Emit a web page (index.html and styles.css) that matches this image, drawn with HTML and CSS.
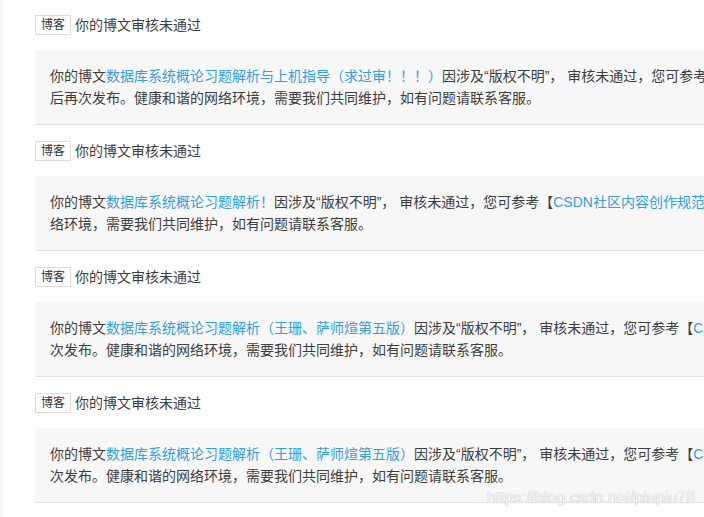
FILE: index.html
```html
<!DOCTYPE html>
<html lang="zh-CN">
  <head>
    <meta charset="UTF-8" />
    <meta name="viewport" content="width=device-width, initial-scale=1.0" />
    <title>消息通知</title>
    <link rel="stylesheet" href="styles.css">
  </head>
  <body class="body">
    <div class="page">
      <div class="item">
        <div class="head">
          <span class="tag">博客</span>
          <span class="title">你的博文审核未通过</span>
        </div>
        <div class="msg">你的博文<a class="link" href="#">数据库系统概论习题解析与上机指导（求过审！！！）</a>因涉及“版权不明”， 审核未通过，您可参考【<a class="link" href="#">CSDN社区内容创作规范</a>】修改后再次发布。健康和谐的网络环境，需要我们共同维护，如有问题请联系客服。</div>
      </div>
      <div class="item">
        <div class="head">
          <span class="tag">博客</span>
          <span class="title">你的博文审核未通过</span>
        </div>
        <div class="msg">你的博文<a class="link" href="#">数据库系统概论习题解析！</a>因涉及“版权不明”， 审核未通过，您可参考【<a class="link" href="#">CSDN社区内容创作规范</a>】修改后再次发布。健康和谐的网络环境，需要我们共同维护，如有问题请联系客服。</div>
      </div>
      <div class="item">
        <div class="head">
          <span class="tag">博客</span>
          <span class="title">你的博文审核未通过</span>
        </div>
        <div class="msg">你的博文<a class="link" href="#">数据库系统概论习题解析（王珊、萨师煊第五版）</a>因涉及“版权不明”， 审核未通过，您可参考【<a class="link" href="#">CSDN社区内容创作规范</a>】修改后再次发布。健康和谐的网络环境，需要我们共同维护，如有问题请联系客服。</div>
      </div>
      <div class="item">
        <div class="head">
          <span class="tag">博客</span>
          <span class="title">你的博文审核未通过</span>
        </div>
        <div class="msg">你的博文<a class="link" href="#">数据库系统概论习题解析（王珊、萨师煊第五版）</a>因涉及“版权不明”， 审核未通过，您可参考【<a class="link" href="#">CSDN社区内容创作规范</a>】修改后再次发布。健康和谐的网络环境，需要我们共同维护，如有问题请联系客服。</div>
      </div>
    </div>
    <div class="watermark">https://blog.csdn.net/piupiu78</div>
  </body>
</html>
```

FILE: styles.css
```css
.body {
  margin: 0;
  overflow: hidden;
  background-color: #fff;
  font-family: "Liberation Sans", "Noto Sans CJK SC", sans-serif;
  color: #3d3d3d;
}
.page {
  border-left: 3px solid #f3f4f6;
  padding: 15px 0 0 32px;
  width: 1000px;
  min-height: 517px;
}
.item {
  margin-bottom: 16px;
}
.head {
  display: flex;
  align-items: center;
  height: 20px;
}
.tag {
  border: 1px solid #dcdcdc;
  padding: 0 5px;
  font-size: 12px;
  line-height: 18px;
  color: #333;
}
.title {
  margin-left: 4px;
  font-size: 14px;
  line-height: 20px;
}
.msg {
  margin-top: 15px;
  width: 874px;
  padding: 15px;
  background-color: #f7f7f7;
  border-bottom: 1px solid #e2e2e2;
  font-size: 14px;
  line-height: 22px;
}
.link {
  color: #349edf;
  text-decoration: none;
}
.watermark {
  position: absolute;
  left: 487px;
  top: 489px;
  font-size: 16px;
  line-height: 18px;
  color: rgba(255, 255, 255, 0.92);
  text-shadow: 0 0 1px #9a9a9a;
}
```
